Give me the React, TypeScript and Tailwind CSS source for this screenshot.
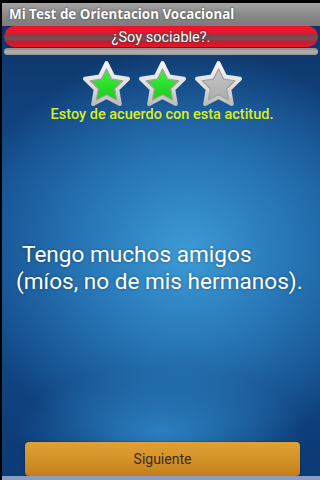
import React from "react";

const STAR = "50,3 64.69,32.77 97.55,37.55 73.78,60.73 79.39,93.45 50,78 20.61,93.45 26.22,60.73 2.45,37.55 35.31,32.77";

function Star({ on, id }: { on: boolean; id: string }) {
  return (
    <svg width="51" height="47" viewBox="-6 -4 112 104">
      <defs>
        <linearGradient id={`rim${id}`} x1="0" y1="0" x2="0" y2="1">
          <stop offset="0" stopColor="#f6f6f6" />
          <stop offset="0.6" stopColor="#dcdcdc" />
          <stop offset="1" stopColor="#bcbcbc" />
        </linearGradient>
        <linearGradient id={`fill${id}`} x1="0" y1="0" x2="0" y2="1">
          {on ? (
            <>
              <stop offset="0" stopColor="#3ef23e" />
              <stop offset="1" stopColor="#1ccc1c" />
            </>
          ) : (
            <>
              <stop offset="0" stopColor="#c8c8c8" />
              <stop offset="1" stopColor="#acacac" />
            </>
          )}
        </linearGradient>
      </defs>
      <polygon points={STAR} fill={`url(#rim${id})`} stroke={`url(#rim${id})`} strokeWidth="9" strokeLinejoin="round" />
      <g transform="translate(50 56) scale(0.76) translate(-50 -56)">
        <polygon points={STAR} fill={`url(#fill${id})`} stroke="#a0a0a0" strokeWidth="3.5" strokeLinejoin="round" />
      </g>
    </svg>
  );
}

export default function App() {
  return (
    <div className="w-[320px] h-[480px] bg-black pl-[2px] pt-[3px] flex flex-col overflow-hidden" style={{ fontFamily: "Roboto, 'Noto Sans', sans-serif" }}>
      <div className="h-[23px] shrink-0 bg-[linear-gradient(#a4a4a4,#8a8a8a_50%,#7c7c7c)] flex items-center pl-[7px]">
        <span className="text-white font-bold text-[13.4px] leading-none [text-shadow:0_0_2px_#333]" style={{ fontFamily: "'Noto Sans', sans-serif" }}>
          Mi Test de Orientacion Vocacional
        </span>
      </div>
      <div className="flex-1 flex flex-col bg-[radial-gradient(ellipse_70%_45%_at_58%_50%,#3d9bd4_0%,#2a7bbb_40%,transparent_100%),radial-gradient(ellipse_45%_14%_at_50%_89%,#2b80c1_0%,transparent_100%),linear-gradient(#0d3468,#134d8e_35%,#124a8a_60%,#0c3a74)]">
        <div className="h-[21px] mx-[2px] rounded-full bg-[linear-gradient(#f0142c_0%,#ea162c_30%,#9a3444_40%,#6e5258_62%,#c81a2c_76%,#e8162c_100%)] flex items-center justify-center">
          <span className="text-white text-[14.5px] leading-none mt-[4px] [text-shadow:0_0_2px_#222]">¿Soy sociable?.</span>
        </div>
        <div className="h-[7px] mt-[1px] mx-[2px] rounded-full bg-[linear-gradient(#8a8a8a,#b0b0b0_50%,#9a9a9a)]" />
        <div className="mt-[5px] flex justify-center gap-[5px] pl-[2px]">
          <Star on id="a" />
          <Star on id="b" />
          <Star on={false} id="c" />
        </div>
        <div className="text-center text-[14.5px] leading-[16px] text-[#d8ef1e] font-medium pl-[2px]">
          Estoy de acuerdo con esta actitud.
        </div>
        <div className="mt-[118px] pl-[14px] text-white text-[22.6px] leading-[27px] [text-shadow:0_0_3px_rgba(0,0,0,0.4)]">
          <div className="pl-[6px]">Tengo muchos amigos</div>
          <div>(míos, no de mis hermanos).</div>
        </div>
        <div className="flex-1" />
        <div className="ml-[23px] w-[275px] h-[34px] rounded-[4px] bg-[linear-gradient(#dfa034,#d4932a_50%,#c27e1c)] flex items-center justify-center shadow-[0_0_2px_rgba(0,0,0,0.5)]">
          <span className="text-[#3a2c1c] text-[14px]">Siguiente</span>
        </div>
        <div className="h-[4px] bg-[#8c9cc0]" />
      </div>
    </div>
  );
}
